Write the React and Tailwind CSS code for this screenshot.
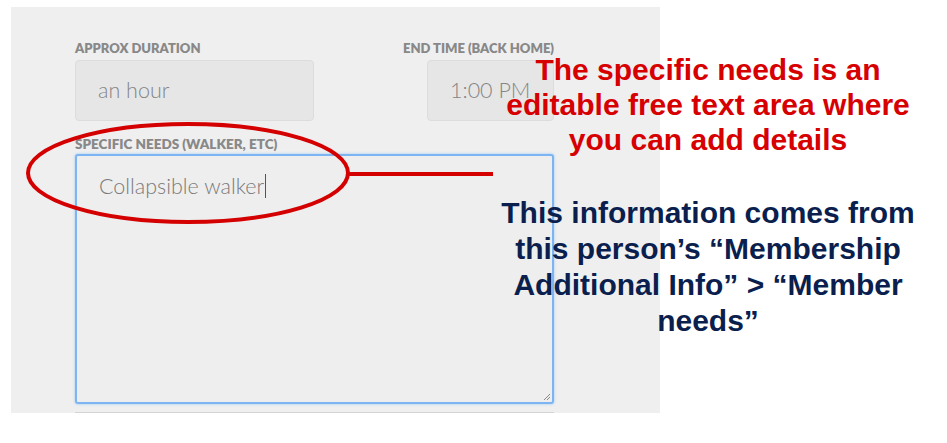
import React from "react";

export default function App() {
  return (
    <div className="relative w-[947px] h-[443px] bg-white overflow-hidden">
      <div className="ml-[11px] pt-[7px] w-[649px]">
        <div
          className="h-[406px] bg-[#efefef] overflow-hidden pl-[64px] pt-[33px] pr-[106px]"
          style={{ fontFamily: "Lato, 'Open Sans', sans-serif" }}
        >
          <div className="flex justify-between">
            <div className="flex flex-col w-[239px]">
              <div className="text-[13px] leading-[16px] font-extrabold text-[#888888] h-[20px] whitespace-nowrap">
                APPROX DURATION
              </div>
              <div className="h-[61px] rounded-[4px] bg-[#e6e6e6] border border-[#dcdcdc] flex items-center pl-[22px] text-[21.5px] font-light text-[#858585]">
                an hour
              </div>
            </div>
            <div className="flex flex-col items-end">
              <div className="text-[13px] leading-[16px] font-extrabold text-[#888888] h-[20px] whitespace-nowrap">
                END TIME (BACK HOME)
              </div>
              <div className="w-[127px] h-[61px] rounded-[4px] bg-[#e6e6e6] border border-[#dcdcdc] flex items-center pl-[22px] text-[21.5px] font-light text-[#858585] whitespace-nowrap">
                1:00 PM
              </div>
            </div>
          </div>
          <div className="mt-[15px] text-[13.5px] leading-[16px] font-extrabold text-[#888888] h-[18px] whitespace-nowrap">
            SPECIFIC NEEDS (WALKER, ETC)
          </div>
          <div className="relative h-[250px] rounded-[3px] border-2 border-[#7db5f3] shadow-[0_0_3px_#9cc8f7] bg-[#eeeeee] pl-[22px] pt-[16px]">
            <div className="text-[21.5px] leading-[28px] font-light text-[#7a7a7a] flex items-center">
              <span>Collapsible walker</span>
              <span className="inline-block w-px h-[24px] bg-[#555] ml-[1px]" />
            </div>
            <svg className="absolute right-[1px] bottom-[1px]" width="8" height="8" viewBox="0 0 8 8">
              <path d="M7 1 L1 7 M7 4 L4 7" stroke="#888" strokeWidth="1" fill="none" />
            </svg>
          </div>
          <div className="mt-[8px] h-[2px] bg-[#d4d4d4]" />
        </div>
      </div>

      <svg className="absolute left-0 top-0 pointer-events-none" width="947" height="443">
        <ellipse cx="188" cy="173" rx="160" ry="49" fill="none" stroke="#d40000" strokeWidth="4" />
        <line x1="348" y1="174" x2="493" y2="174" stroke="#d40000" strokeWidth="4" />
      </svg>

      <div
        className="absolute left-[468px] top-[52px] w-[480px] text-center text-[30px] leading-[35px] font-bold text-[#d70000] whitespace-nowrap"
        style={{ fontFamily: "'Liberation Sans', Arial, sans-serif" }}
      >
        The specific needs is an
        <br />
        editable free text area where
        <br />
        you can add details
      </div>

      <div
        className="absolute left-[468px] top-[195px] w-[480px] text-center text-[30px] leading-[36px] font-bold text-[#0b1f4f] whitespace-nowrap"
        style={{ fontFamily: "'Liberation Sans', Arial, sans-serif" }}
      >
        This information comes from
        <br />
        this person’s “Membership
        <br />
        Additional Info” &gt; “Member
        <br />
        needs”
      </div>
    </div>
  );
}
